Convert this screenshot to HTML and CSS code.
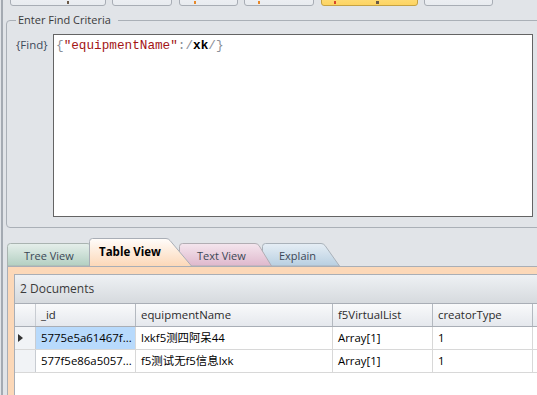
FILE: index.html
```html
<!DOCTYPE html>
<html lang="en">
<head>
  <meta charset="UTF-8">
  <title>Find</title>
  <link rel="stylesheet" href="styles.css">
</head>
<body>

  <div class="app">

    <div class="toolbar">
      <div class="tb-btn b1"><span class="bit dark"></span></div>
      <div class="tb-btn b2"></div>
      <div class="tb-btn b3"><span class="bit orange"></span></div>
      <div class="tb-btn b4"><span class="bit orange"></span></div>
      <div class="tb-btn b5 active"><span class="bit red"></span><span class="bit dark gap"></span></div>
      <div class="tb-btn b6"></div>
    </div>

    <fieldset class="criteria">
      <legend>Enter Find Criteria</legend>
      <div class="find-row">
        <label class="find-label">{Find}</label>
        <div class="find-box"><span class="c-punc">{</span><span class="c-str">"equipmentName"</span><span class="c-punc">:/</span><span class="c-re">xk</span><span class="c-punc">/}</span></div>
      </div>
    </fieldset>

    <div class="tabs">
      <div class="tab tree">
        <svg class="tab-shape" width="99" height="23">
          <defs>
            <linearGradient id="g-tree" x1="0" y1="0" x2="0" y2="1">
              <stop offset="0" stop-color="#e6efeb"/>
              <stop offset="1" stop-color="#b2cfc1"/>
            </linearGradient>
          </defs>
          <path d="M0.5,23 V3.5 Q0.5,0.5 3.5,0.5 H80 Q82.5,0.5 84,2.5 L98.5,23 Z" fill="url(#g-tree)" stroke="#a9b3b0"/>
        </svg>
        <span class="tab-label">Tree View</span>
      </div>
      <div class="tab table selected">
        <svg class="tab-shape" width="103" height="28">
          <defs>
            <linearGradient id="g-table" x1="0" y1="0" x2="0" y2="1">
              <stop offset="0" stop-color="#fffdfb"/>
              <stop offset="1" stop-color="#fcd8b8"/>
            </linearGradient>
          </defs>
          <path d="M0.5,28 V3.5 Q0.5,0.5 3.5,0.5 H77 Q79.5,0.5 81,2.5 L102.5,28" fill="url(#g-table)" stroke="#a9aeb6"/>
        </svg>
        <span class="tab-label">Table View</span>
      </div>
      <div class="tab text">
        <svg class="tab-shape" width="93" height="23">
          <defs>
            <linearGradient id="g-text" x1="0" y1="0" x2="0" y2="1">
              <stop offset="0" stop-color="#f4e6ee"/>
              <stop offset="1" stop-color="#dfb8cc"/>
            </linearGradient>
          </defs>
          <path d="M0.5,23 V3.5 Q0.5,0.5 3.5,0.5 H76 Q78.5,0.5 80,2.5 L92.5,23 Z" fill="url(#g-text)" stroke="#b1adb3"/>
        </svg>
        <span class="tab-label">Text View</span>
      </div>
      <div class="tab explain">
        <svg class="tab-shape" width="78" height="23">
          <defs>
            <linearGradient id="g-explain" x1="0" y1="0" x2="0" y2="1">
              <stop offset="0" stop-color="#e6eef5"/>
              <stop offset="1" stop-color="#b8cfe1"/>
            </linearGradient>
          </defs>
          <path d="M0.5,23 V3.5 Q0.5,0.5 3.5,0.5 H59 Q61.5,0.5 63,2.5 L77.5,23 Z" fill="url(#g-explain)" stroke="#a9b1b9"/>
        </svg>
        <span class="tab-label">Explain</span>
      </div>
    </div>

    <div class="tab-body">
      <div class="results">
        <div class="results-head">2 Documents</div>
        <div class="grid">
          <div class="grid-row header">
            <div class="cell rh"></div>
            <div class="cell">_id</div>
            <div class="cell">equipmentName</div>
            <div class="cell">f5VirtualList</div>
            <div class="cell">creatorType</div>
            <div class="cell"></div>
          </div>
          <div class="grid-row">
            <div class="cell rh"><span class="row-arrow"></span></div>
            <div class="cell sel">5775e5a61467f...</div>
            <div class="cell">lxkf5测四阿呆44</div>
            <div class="cell">Array[1]</div>
            <div class="cell">1</div>
            <div class="cell"></div>
          </div>
          <div class="grid-row">
            <div class="cell rh"></div>
            <div class="cell">577f5e86a5057...</div>
            <div class="cell">f5测试无f5信息lxk</div>
            <div class="cell">Array[1]</div>
            <div class="cell">1</div>
            <div class="cell"></div>
          </div>
        </div>
      </div>
    </div>

  </div>

</body>
</html>
```

FILE: styles.css
```css
body {
  margin: 0;
  padding: 0;
  overflow: hidden;
  background: #e1e4e8;
  font-family: "Open Sans", "Noto Sans CJK SC", sans-serif;
  font-size: 11px;
  color: #3b3b3b;
}

.app {
  width: 534px;
  height: 395px;
  margin-left: 1px;
  border-left: 2px solid #a4aab2;
  overflow: hidden;
  display: flex;
  flex-direction: column;
}

/* toolbar, mostly scrolled off the top */
.toolbar {
  height: 6px;
  overflow: hidden;
  display: flex;
  align-items: flex-end;
  gap: 6px;
  padding-left: 7px;
  flex-shrink: 0;
}

.tb-btn {
  height: 22px;
  box-sizing: border-box;
  border: 1px solid #a8adb5;
  border-radius: 3px;
  background: linear-gradient(#f6f7f9, #e8ebef);
  display: flex;
  align-items: flex-start;
  flex-shrink: 0;
}

.tb-btn.active {
  background: linear-gradient(#ffeaa0, #fdd462);
  border-color: #c5a243;
}

.b1 { width: 96px; padding-left: 56px; }
.b2 { width: 60px; }
.b3 { width: 59px; padding-left: 14px; margin-left: 1px; }
.b4 { width: 70px; padding-left: 13px; }
.b5 { width: 97px; padding-left: 12px; margin-left: 1px; }
.b6 { width: 69px; }

.bit {
  width: 2px;
  height: 3px;
  margin-top: 16px;
}
.bit.dark { background: #6b5a48; }
.bit.orange { background: #e8892a; }
.bit.red { background: #d8452a; }
.bit.gap { margin-left: 40px; width: 3px; }

/* find criteria group */
.criteria {
  margin: 6px -10px 0 3px;
  padding: 0 0 10px 9px;
  border: 1px solid #aab0b7;
  border-radius: 4px;
  min-width: 0;
  flex-shrink: 0;
}

.criteria legend {
  padding: 0 7px 0 2px;
  margin-left: 0;
  line-height: 16px;
  font-size: 11px;
  color: #3b3b3b;
}

.find-row {
  display: flex;
  padding-top: 6px;
}

.find-label {
  width: 37px;
  padding-top: 3px;
  line-height: 16px;
  font-size: 11.5px;
  color: #404a5a;
}

.find-box {
  width: 480px;
  height: 183px;
  box-sizing: border-box;
  border: 1px solid #646464;
  background: #fff;
  padding: 3px 2px;
  font-family: "Liberation Mono", monospace;
  font-size: 12.7px;
  line-height: 15px;
  white-space: pre;
}

.c-punc { color: #8a8f98; }
.c-str { color: #a31515; }
.c-re { color: #000; font-weight: bold; }

/* tabs */
.tabs {
  display: flex;
  align-items: flex-end;
  height: 28px;
  margin-top: 10px;
  padding-left: 4px;
  flex-shrink: 0;
}

.tab {
  position: relative;
  display: flex;
  align-items: center;
  box-sizing: border-box;
  height: 23px;
  padding-left: 17px;
  color: #3c4756;
}

.tab-shape {
  position: absolute;
  left: 0;
  top: 0;
}

.tab-label {
  position: relative;
  padding-top: 1px;
}

.tab.tree { width: 99px; margin-right: -17px; z-index: 3; }
.tab.table { width: 103px; height: 28px; margin-right: -13px; padding-left: 10px; z-index: 4; }
.tab.text { width: 93px; margin-right: -10px; padding-left: 18px; z-index: 2; }
.tab.explain { width: 78px; z-index: 1; }

.tab.selected .tab-label {
  color: #000;
  font-weight: bold;
  font-size: 11.5px;
  padding-top: 0;
  padding-bottom: 2px;
}

.tab-body {
  flex: 1;
  margin-left: 4px;
  border-top: 1px solid #a9aeb6;
  border-left: 1px solid #a9aeb6;
  background: #fcd8b8;
  padding: 7px 0 0 6px;
  position: relative;
  z-index: 0;
}

.results {
  height: 100%;
  border-top: 1px solid #a9aeb6;
  border-left: 1px solid #a9aeb6;
  background: #fff;
}

.results-head {
  height: 29px;
  box-sizing: border-box;
  border-bottom: 1px solid #a9aeb6;
  background: linear-gradient(#eef1f4, #d6dade);
  padding-left: 5px;
  line-height: 28px;
  font-size: 12px;
  color: #3b3b3b;
}

.grid-row {
  display: grid;
  grid-template-columns: 21px 100px 197px 100px 100px 60px;
  height: 23px;
  box-sizing: border-box;
  border-bottom: 1px solid #d8d8d8;
}

.grid-row.header {
  border-bottom-color: #a9aeb6;
  background: linear-gradient(#f9fafb, #e5e8ed);
}

.cell {
  border-right: 1px solid #d8d8d8;
  padding-left: 5px;
  line-height: 22px;
  font-size: 11.4px;
  color: #000;
  white-space: nowrap;
  overflow: hidden;
}

.header .cell {
  border-right-color: #b4b9c0;
  color: #2b2b2b;
}

.cell.rh {
  padding-left: 0;
  background: #f1f3f6;
  border-right-color: #c8ccd2;
}

.header .cell.rh {
  background: none;
}

.cell.sel {
  background: #b8dafc;
}

.row-arrow {
  display: block;
  width: 0;
  height: 0;
  margin: 7px 0 0 3px;
  border-top: 4px solid transparent;
  border-bottom: 4px solid transparent;
  border-left: 5px solid #333;
}
```
